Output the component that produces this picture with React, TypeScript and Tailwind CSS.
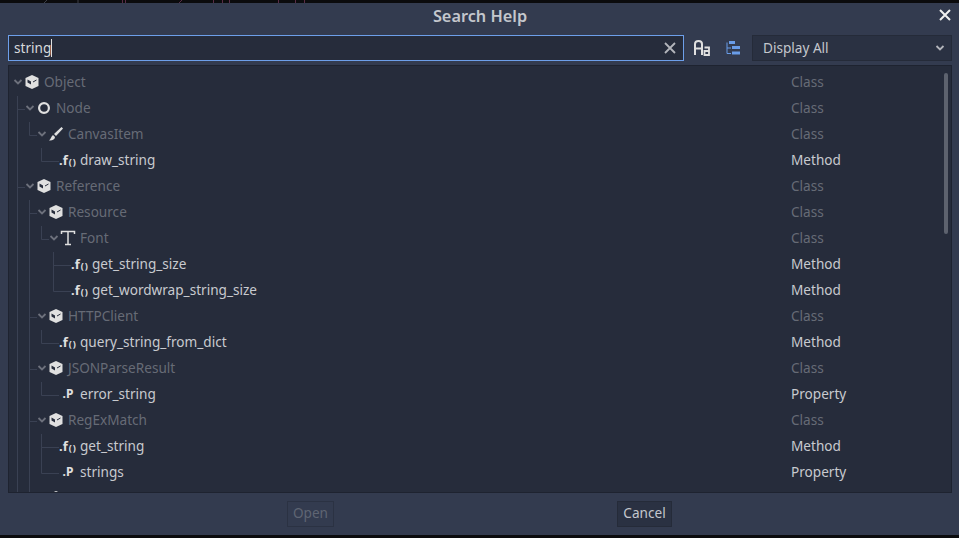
const font = 'font-["Noto_Sans",sans-serif]'

type Row = {
  depth: number
  name: string
  kind: 'Class' | 'Method' | 'Property'
  icon: 'cube' | 'node' | 'brush' | 'font' | 'method' | 'prop'
}

const rows: Row[] = [
  { depth: 0, name: 'Object', kind: 'Class', icon: 'cube' },
  { depth: 1, name: 'Node', kind: 'Class', icon: 'node' },
  { depth: 2, name: 'CanvasItem', kind: 'Class', icon: 'brush' },
  { depth: 3, name: 'draw_string', kind: 'Method', icon: 'method' },
  { depth: 1, name: 'Reference', kind: 'Class', icon: 'cube' },
  { depth: 2, name: 'Resource', kind: 'Class', icon: 'cube' },
  { depth: 3, name: 'Font', kind: 'Class', icon: 'font' },
  { depth: 4, name: 'get_string_size', kind: 'Method', icon: 'method' },
  { depth: 4, name: 'get_wordwrap_string_size', kind: 'Method', icon: 'method' },
  { depth: 2, name: 'HTTPClient', kind: 'Class', icon: 'cube' },
  { depth: 3, name: 'query_string_from_dict', kind: 'Method', icon: 'method' },
  { depth: 2, name: 'JSONParseResult', kind: 'Class', icon: 'cube' },
  { depth: 3, name: 'error_string', kind: 'Property', icon: 'prop' },
  { depth: 2, name: 'RegExMatch', kind: 'Class', icon: 'cube' },
  { depth: 3, name: 'get_string', kind: 'Method', icon: 'method' },
  { depth: 3, name: 'strings', kind: 'Property', icon: 'prop' },
  { depth: 2, name: 'StreamPeer', kind: 'Class', icon: 'cube' },
]

function Cube() {
  return (
    <svg className="shrink-0" width="14" height="14" viewBox="0 0 14 14">
      <path d="M7 0 L13.5 3 V11 L7 14 L0.5 11 V3 Z" fill="#e0e0e0" />
      <path d="M2.5 4.6 L6 6.6 V9.6 L2.5 7.6 Z" fill="#262c3b" />
      <path d="M8 7 L11.5 5" stroke="#262c3b" strokeWidth="1" fill="none" />
    </svg>
  )
}

function TreeIcon({ icon }: { icon: Row['icon'] }) {
  if (icon === 'cube') return <Cube />
  if (icon === 'node')
    return (
      <svg className="shrink-0" width="14" height="14" viewBox="0 0 14 14">
        <circle cx="7" cy="7" r="4.9" fill="none" stroke="#e0e0e0" strokeWidth="2.2" />
      </svg>
    )
  if (icon === 'brush')
    return (
      <svg className="shrink-0" width="16" height="16" viewBox="0 0 16 16">
        <path d="M13.5 1 L15 2.5 L8 10 L6 8 Z" fill="#e0e0e0" />
        <path d="M5 9 L7 11 C7 13.5 4 15 1 14.5 C3 13 3 10.5 5 9 Z" fill="#e0e0e0" />
      </svg>
    )
  if (icon === 'font')
    return (
      <svg className="shrink-0" width="16" height="16" viewBox="0 0 16 16">
        <path d="M1.5 4 V1.5 H14.5 V4 M8 1.5 V14.5 M5 14.5 H11" fill="none" stroke="#e0e0e0" strokeWidth="1.5" />
      </svg>
    )
  if (icon === 'method')
    return (
      <span className={`${font} shrink-0 whitespace-nowrap text-[13px] leading-none text-[#e0e0e0]`}>
        <span className="font-bold">.f</span>
        <span className="ml-[1px] text-[9px] font-bold tracking-[1px]">()</span>
      </span>
    )
  return <span className={`${font} shrink-0 text-[12px] font-bold leading-none text-[#e0e0e0]`}>.P</span>
}

function Chevron({ color = '#6d717c' }: { color?: string }) {
  return (
    <svg width="10" height="8" viewBox="0 0 10 8">
      <path d="M1.5 2 L5 5.5 L8.5 2" fill="none" stroke={color} strokeWidth="1.8" />
    </svg>
  )
}

// connector lines between tree rows, coordinates relative to the tree panel
const guides = [
  'M8.5 30 V428 M8.5 43.5 H16 M8.5 121.5 H16',
  'M20.5 56 V69.5 H28 M20.5 134 V428 M20.5 147.5 H28 M20.5 251.5 H28 M20.5 303.5 H28 M20.5 355.5 H28',
  'M32.5 82 V95.5 H50 M32.5 160 V173.5 H40 M32.5 264 V277.5 H50 M32.5 316 V329.5 H50 M32.5 368 V407.5 H50 M32.5 381.5 H50',
  'M44.5 186 V225.5 H62 M44.5 199.5 H62',
]

function TreeRow({ row }: { row: Row }) {
  const isClass = row.kind === 'Class'
  return (
    <div className="flex h-[26px] shrink-0 items-center">
      <div className="flex items-center" style={{ paddingLeft: row.depth * 12 }}>
        <div className="flex w-[16px] justify-center pl-[2px]">{isClass && <Chevron />}</div>
        <div className="flex w-[14px] justify-center">
          <TreeIcon icon={row.icon} />
        </div>
      </div>
      <span className={`ml-[5px] ${isClass ? 'text-[#666b76]' : 'text-[#c8cacf]'}`}>{row.name}</span>
      <span className={`absolute left-[782px] ${isClass ? 'text-[#666b76]' : 'text-[#c8cacf]'}`}>{row.kind}</span>
    </div>
  )
}

export default function App() {
  return (
    <div className={`${font} h-[538px] w-[959px] overflow-hidden bg-[#0b0b0d] text-[13.6px]`}>
      <svg className="block" width="959" height="3">
        <path d="M47 0 L44 3 M78 0 V3" stroke="#3c3f47" fill="none" />
        <path d="M122.5 0 V3 M125.5 0 V3 M182 0 L179 3 M213.5 0 V3 M222.5 0 V3 M229.5 0 V3 M278.5 0 V3 M295.5 0 V3 M304.5 0 V3" stroke="#5a2c46" fill="none" />
      </svg>
      <div className="flex h-[532px] flex-col bg-[#333b4f] pl-[8px] pr-[7px]">
        <div className="relative flex h-[32px] items-center justify-center pb-[6px]">
          <span className="text-[16.3px] font-semibold text-[#c4c7cd]">Search Help</span>
          <button className="absolute right-0 top-[5px] text-[#e0e0e0]">
            <svg width="14" height="14" viewBox="0 0 14 14">
              <path d="M2 2 L12 12 M12 2 L2 12" stroke="#f0f0f0" strokeWidth="2" />
            </svg>
          </button>
        </div>

        <div className="flex h-[26px] items-center">
          <div className="flex h-full w-[676px] items-center border border-[#6d9fea] bg-[#262c3b] pl-[5px] pr-[6px]">
            <span className="text-[#d7d9dc]">string</span>
            <span className="h-[18px] w-[1px] bg-[#e0e0e0]" />
            <svg className="ml-auto" width="14" height="14" viewBox="0 0 14 14">
              <path d="M2 2 L12 12 M12 2 L2 12" stroke="#b3b5bb" strokeWidth="1.8" />
            </svg>
          </div>
          <div className="flex w-[68px] items-center">
            <svg className="ml-[9px]" width="17" height="16" viewBox="0 0 17 16">
              <path d="M2 15 V4 C2 2 3.5 1 5.5 1 C7.5 1 9 2 9 4 V15 M2 8.5 H9" fill="none" stroke="#e0e0e0" strokeWidth="2" />
              <path d="M11.5 7.5 H16 V15 H11.5 V11 H16" fill="none" stroke="#e0e0e0" strokeWidth="1.8" />
            </svg>
            <svg className="ml-[16px]" width="14" height="14" viewBox="0 0 14 14">
              <path d="M1 1.5 V12.5 H5 M1 7 H5" fill="none" stroke="#699ce8" strokeWidth="1" />
              <rect x="3" y="0" width="6" height="3" fill="#699ce8" />
              <rect x="6" y="5" width="8" height="3" fill="#699ce8" />
              <rect x="6" y="10.5" width="8" height="3" fill="#699ce8" />
            </svg>
          </div>
          <div className="flex h-full w-[200px] items-center justify-between border border-[#252b39] bg-[#2a3142] pl-[10px] pr-[6px] text-[#c4c7cd]">
            <span>Display All</span>
            <Chevron color="#b3b5bb" />
          </div>
        </div>

        <div className="relative mt-[4px] flex h-[428px] flex-col overflow-hidden border border-[#1e2330] bg-[#262c3b] pt-[3px]">
          <svg className="absolute left-0 top-0" width="80" height="428">
            <path d={guides.join(' ')} fill="none" stroke="#3a4153" strokeWidth="1" />
          </svg>
          {rows.map((row) => (
            <TreeRow key={row.name} row={row} />
          ))}
          <div className="absolute left-[935px] top-[7px] h-[161px] w-[4px] rounded-[2px] bg-[#5d626e]" />
        </div>

        <div className="flex h-[42px] items-center">
          <button className="ml-[279px] h-[26px] w-[47px] border border-[#2b3243] bg-[#333b4f] pb-[1px] text-[#5f6573]">Open</button>
          <button className="ml-[283px] h-[26px] w-[55px] border border-[#252b39] bg-[#2a3142] pb-[1px] text-[#c4c7cd]">Cancel</button>
        </div>
      </div>
    </div>
  )
}
